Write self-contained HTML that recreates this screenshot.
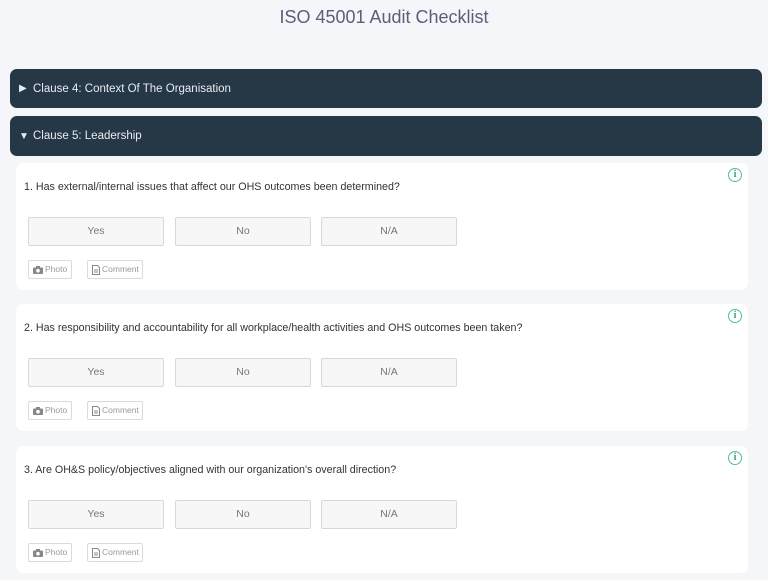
<!DOCTYPE html>
<html><head><meta charset="utf-8"><style>
*{box-sizing:border-box;margin:0;padding:0}
body{width:768px;height:580px;overflow:hidden;background:#f4f6fa;font-family:"Liberation Sans",sans-serif;position:relative}
.title{position:absolute;top:7px;left:0;width:768px;text-align:center;font-size:18px;color:#5a5f78}
.hdr{position:absolute;left:10px;width:752px;background:#263746;border-radius:7px;color:#e8edf2;font-size:11.5px;padding-left:9px;display:flex;align-items:center}
.hdr span{font-size:10px;margin-right:5px;width:9px}
.card{position:absolute;left:16px;width:732px;height:127px;background:#fff;border-radius:7px}
.q{position:absolute;left:8px;top:18px;font-size:10.7px;color:#333}
.b{position:absolute;top:54px;width:136px;height:29px;border:1px solid #d6d8dc;border-radius:2px;background:#f7f7f8;color:#777;font-size:10.5px;text-align:center;line-height:27px}
.s{position:absolute;top:97px;height:19px;border:1px solid #d9dadd;border-radius:2px;color:#999;font-size:8.5px;line-height:17px;padding-left:4px;display:flex;align-items:center;gap:2px}
.i{position:absolute;left:712px;top:5px;width:14px;height:14px;border:1.5px solid #4fbf9a;border-radius:50%;color:#3a9d7c;font-size:10px;font-weight:bold;text-align:center;line-height:11px;font-family:"Liberation Serif",serif}
</style></head><body>
<div class="title">ISO 45001 Audit Checklist</div>
<div class="hdr" style="top:69px;height:39px"><span>▶</span>Clause 4: Context Of The Organisation</div>
<div class="hdr" style="top:116px;height:40px"><span>▼</span>Clause 5: Leadership</div>

<div class="card" style="top:163px">
<div class="i">i</div>
<div class="q">1. Has external/internal issues that affect our OHS outcomes been determined?</div>
<div class="b" style="left:12px">Yes</div><div class="b" style="left:159px">No</div><div class="b" style="left:305px">N/A</div>
<div class="s" style="left:12px;width:44px"><svg width="10" height="8" viewBox="0 0 10 8"><rect x="0" y="1.5" width="10" height="6.5" rx="1" fill="#888"/><rect x="3" y="0" width="4" height="2" fill="#888"/><circle cx="5" cy="4.7" r="1.8" fill="#fff"/></svg>Photo</div>
<div class="s" style="left:71px;width:56px"><svg width="8" height="10" viewBox="0 0 8 10"><path d="M0.5 0.5h5l2 2v7h-7z" fill="none" stroke="#888"/><path d="M2 5h4M2 7h4" stroke="#888"/></svg>Comment</div>
</div>

<div class="card" style="top:304px">
<div class="i">i</div>
<div class="q">2. Has responsibility and accountability for all workplace/health activities and OHS outcomes been taken?</div>
<div class="b" style="left:12px">Yes</div><div class="b" style="left:159px">No</div><div class="b" style="left:305px">N/A</div>
<div class="s" style="left:12px;width:44px"><svg width="10" height="8" viewBox="0 0 10 8"><rect x="0" y="1.5" width="10" height="6.5" rx="1" fill="#888"/><rect x="3" y="0" width="4" height="2" fill="#888"/><circle cx="5" cy="4.7" r="1.8" fill="#fff"/></svg>Photo</div>
<div class="s" style="left:71px;width:56px"><svg width="8" height="10" viewBox="0 0 8 10"><path d="M0.5 0.5h5l2 2v7h-7z" fill="none" stroke="#888"/><path d="M2 5h4M2 7h4" stroke="#888"/></svg>Comment</div>
</div>

<div class="card" style="top:446px">
<div class="i">i</div>
<div class="q">3. Are OH&amp;S policy/objectives aligned with our organization's overall direction?</div>
<div class="b" style="left:12px">Yes</div><div class="b" style="left:159px">No</div><div class="b" style="left:305px">N/A</div>
<div class="s" style="left:12px;width:44px"><svg width="10" height="8" viewBox="0 0 10 8"><rect x="0" y="1.5" width="10" height="6.5" rx="1" fill="#888"/><rect x="3" y="0" width="4" height="2" fill="#888"/><circle cx="5" cy="4.7" r="1.8" fill="#fff"/></svg>Photo</div>
<div class="s" style="left:71px;width:56px"><svg width="8" height="10" viewBox="0 0 8 10"><path d="M0.5 0.5h5l2 2v7h-7z" fill="none" stroke="#888"/><path d="M2 5h4M2 7h4" stroke="#888"/></svg>Comment</div>
</div>
</body></html>
